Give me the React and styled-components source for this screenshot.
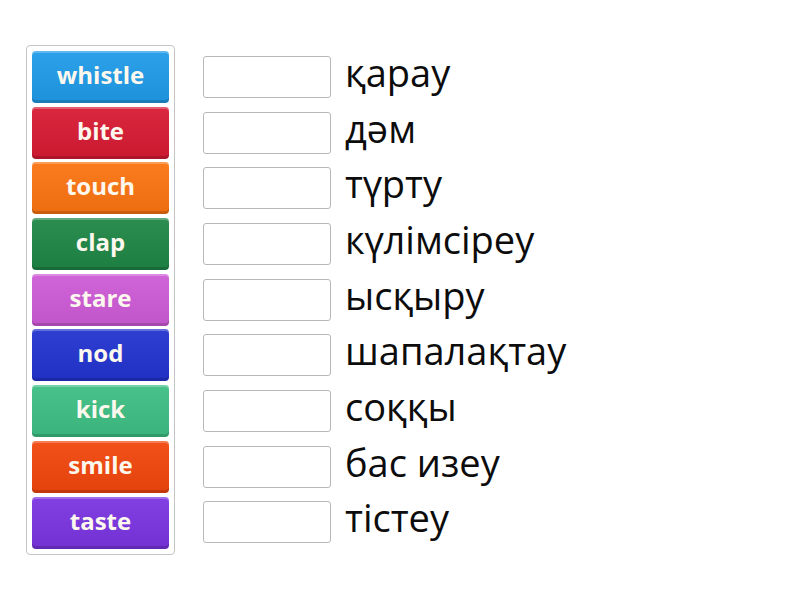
import React from 'react';
import styled, { createGlobalStyle } from 'styled-components';

const GlobalStyle = createGlobalStyle`
  body {
    margin: 0;
    background: #ffffff;
    font-family: 'Open Sans', 'Noto Sans', sans-serif;
  }
`;

const words = [
  { label: 'whistle', color: '#1f9be8' },
  { label: 'bite', color: '#d71a33' },
  { label: 'touch', color: '#fb7410' },
  { label: 'clap', color: '#1f8646' },
  { label: 'stare', color: '#cd5ad6' },
  { label: 'nod', color: '#2233cf' },
  { label: 'kick', color: '#3dbf83' },
  { label: 'smile', color: '#f2460c' },
  { label: 'taste', color: '#7a33e0' },
];

const targets = [
  'қарау',
  'дәм',
  'түрту',
  'күлімсіреу',
  'ысқыру',
  'шапалақтау',
  'соққы',
  'бас изеу',
  'тістеу',
];

const Page = styled.div`
  display: flex;
  align-items: flex-start;
  gap: 28px;
  padding: 45px 0 0 26px;
  width: 800px;
  height: 600px;
  box-sizing: border-box;
`;

const Bank = styled.div`
  display: flex;
  flex-direction: column;
  gap: 3.7px;
  padding: 5px;
  border: 1px solid #c4c4c4;
  border-radius: 4px;
`;

const Tile = styled.div`
  width: 137px;
  height: 52px;
  box-sizing: border-box;
  display: flex;
  align-items: center;
  justify-content: center;
  border-radius: 4px;
  background: linear-gradient(
      rgba(255, 255, 255, 0.06),
      rgba(0, 0, 0, 0.06)
    ),
    ${({ $color }) => $color};
  box-shadow: inset 0 2px 0 rgba(255, 255, 255, 0.25),
    inset 0 -3px 0 rgba(0, 0, 0, 0.15);
  color: #fdf8ee;
  font-size: 24px;
  font-weight: 700;
  padding-bottom: 5px;
`;

const Answers = styled.div`
  display: flex;
  flex-direction: column;
  padding-top: 4px;
`;

const Row = styled.div`
  display: flex;
  align-items: center;
  gap: 14px;
  height: 55.7px;
`;

const Slot = styled.div`
  width: 128px;
  height: 42px;
  box-sizing: border-box;
  border: 1px solid #b8b8b8;
  border-radius: 3px;
  background: #fff;
`;

const Word = styled.span`
  font-size: 38px;
  line-height: 1;
  color: #0c0c0c;
  padding-bottom: 10px;
`;

export default function App() {
  return (
    <>
      <GlobalStyle />
      <Page>
        <Bank>
          {words.map((w) => (
            <Tile key={w.label} $color={w.color}>
              {w.label}
            </Tile>
          ))}
        </Bank>
        <Answers>
          {targets.map((t) => (
            <Row key={t}>
              <Slot />
              <Word>{t}</Word>
            </Row>
          ))}
        </Answers>
      </Page>
    </>
  );
}
